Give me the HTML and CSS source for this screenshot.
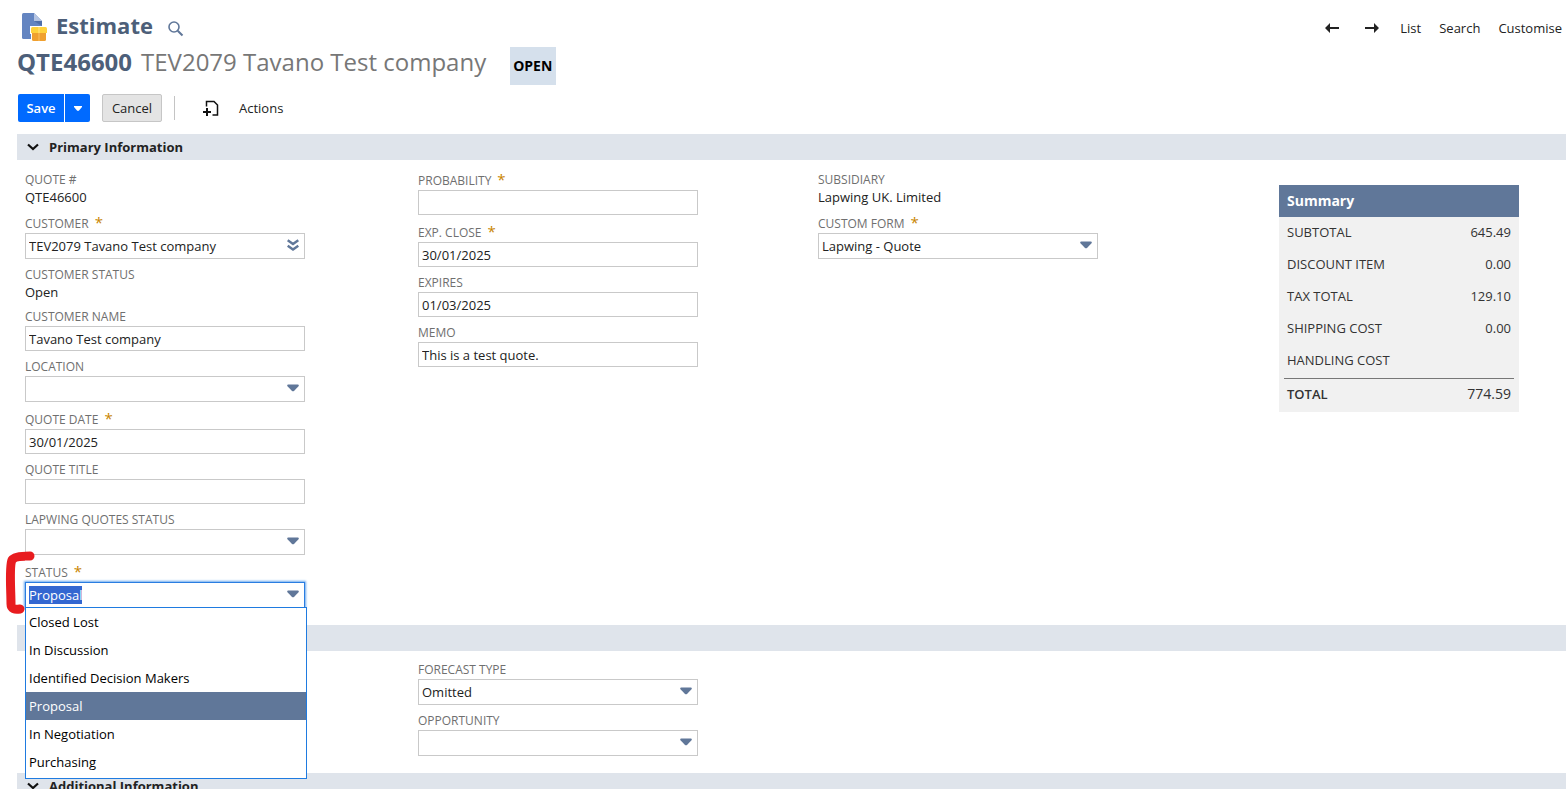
FILE: index.html
```
<!DOCTYPE html>
<html lang="en">
<head>
    <meta charset="UTF-8">
    <meta name="viewport" content="width=device-width, initial-scale=1.0">
    <title>Estimate</title>
    <link rel="stylesheet" href="styles.css">
</head>
<body>

<!-- shared icons -->
<svg class="sprite" aria-hidden="true">
    <symbol id="caret" viewBox="0 0 12 8"><path d="M1.2 .5h9.6c1 0 1.3 1 .7 1.7L7 6.9c-.6.6-1.4.6-2 0L.5 2.200C-.1 1.500.2.5 1.200.5z" fill="#607799"/></symbol>
    <symbol id="chevron" viewBox="0 0 12 8"><path d="M1 1.500 6 6l5-4.500" fill="none" stroke="#111" stroke-width="2.200"/></symbol>
</svg>

<div class="page">
    <!-- title row -->
    <div class="header">
        <div class="title">
            <svg class="record-icon" width="26" height="29" viewBox="0 0 26 29">
                <path d="M0 1.500Q0 0 1.500 0H12l8 8v18H1.500Q0 26 0 24.500z" fill="#6485c1"/>
                <path d="M12 8h8v5z" fill="#4f6fa9"/>
                <path d="M12 0l8 8h-8z" fill="#b4c4e2"/>
                <path d="M8 13h18v8h-1v8H9v-8H8z" fill="#fff"/>
                <path d="M9 15.500Q9 14 10.500 14h13q1.500 0 1.500 1.500V20H9z" fill="#ffd23c"/>
                <path d="M10 20h14v6.500q0 1.500-1.500 1.500h-11Q10 28 10 26.500z" fill="#f0a02f"/>
                <path d="M16.500 14h1v6h-1z" fill="#ffe38a"/>
                <path d="M16.500 20h1v8h-1z" fill="#f8bd63"/>
            </svg>
            <h1>Estimate</h1>
            <button class="icon-btn" aria-label="Quick search">
                <svg width="16" height="16" viewBox="0 0 16 16" fill="none" stroke="#607799">
                    <circle cx="6" cy="6" r="5" stroke-width="1.600"/>
                    <path d="M9.700 9.700 14.500 14.500" stroke-width="2"/>
                </svg>
            </button>
        </div>
        <div class="page-links">
            <a class="arrow" href="#" aria-label="Previous"><svg width="14" height="10" viewBox="0 0 14 10"><path d="M0 5 5 0v4h9v2H5v4z" fill="#222"/></svg></a>
            <a class="arrow" href="#" aria-label="Next"><svg width="14" height="10" viewBox="0 0 14 10"><path d="M14 5 9 0v4H0v2h9v4z" fill="#222"/></svg></a>
            <a href="#">List</a>
            <a href="#">Search</a>
            <a href="#">Customise</a>
        </div>
    </div>

    <div class="record">
        <span class="record-id">QTE46600</span>
        <span class="record-name">TEV2079 Tavano Test company</span>
        <span class="record-status">OPEN</span>
    </div>

    <!-- buttons -->
    <div class="toolbar">
        <div class="split">
            <button class="save">Save</button>
            <button class="save-more" aria-label="More save options">
                <svg width="8" height="5" viewBox="0 0 8 5"><path d="M0 0h8v1L5 4.500q-1 .8-2 0L0 1z" fill="#fff"/></svg>
            </button>
        </div>
        <button class="cancel">Cancel</button>
        <span class="divider"></span>
        <button class="icon-btn" aria-label="New">
            <svg width="16" height="17" viewBox="0 0 16 17" fill="none" stroke="#111" stroke-width="1.500">
                <path d="M3.500 6.500v-5H11l3.500 3.500v10H9.500"/>
                <path d="M0 12h8M4 8v8" stroke-width="2"/>
            </svg>
        </button>
        <button class="actions">Actions</button>
    </div>

    <div class="section-bar">
        <svg width="12" height="8"><use href="#chevron"/></svg>
        <h2>Primary Information</h2>
    </div>
    <div class="section primary">
        <div class="column">
            <div class="field">
                <span class="label">Quote #</span>
                <span class="value">QTE46600</span>
            </div>
            <div class="field">
                <label class="label required" for="customer">Customer</label>
                <div class="control">
                    <input class="box tall" id="customer" type="text" value="TEV2079 Tavano Test company">
                    <svg class="mark" width="12" height="12" viewBox="0 0 12 12" fill="none" stroke="#607799" stroke-width="2.400"><path d="M.7 1.200 6 5l5.300-3.800M.7 6.700 6 10.500l5.300-3.800"/></svg>
                </div>
            </div>
            <div class="field">
                <span class="label">Customer Status</span>
                <span class="value">Open</span>
            </div>
            <div class="field">
                <label class="label" for="customerName">Customer Name</label>
                <input class="box" id="customerName" type="text" value="Tavano Test company">
            </div>
            <div class="field">
                <label class="label" for="location">Location</label>
                <div class="control">
                    <select class="box tall" id="location"><option></option></select>
                    <svg class="mark" width="12" height="8"><use href="#caret"/></svg>
                </div>
            </div>
            <div class="field">
                <label class="label required" for="quoteDate">Quote Date</label>
                <input class="box" id="quoteDate" type="text" value="30/01/2025">
            </div>
            <div class="field">
                <label class="label" for="quoteTitle">Quote Title</label>
                <input class="box" id="quoteTitle" type="text">
            </div>
            <div class="field">
                <label class="label" for="quotesStatus">Lapwing Quotes Status</label>
                <div class="control">
                    <select class="box tall" id="quotesStatus"><option></option></select>
                    <svg class="mark" width="12" height="8"><use href="#caret"/></svg>
                </div>
            </div>
            <div class="field status-field">
                <label class="label required" for="status">Status</label>
                <div class="control">
                    <input class="box tall open" id="status" type="text" value="Proposal" role="combobox" aria-expanded="true" aria-controls="statusList">
                    <svg class="mark" width="12" height="8"><use href="#caret"/></svg>
                    <ul class="dropdown" id="statusList" role="listbox">
                        <li role="option">Closed Lost</li>
                        <li role="option">In Discussion</li>
                        <li role="option">Identified Decision Makers</li>
                        <li role="option" class="selected" aria-selected="true">Proposal</li>
                        <li role="option">In Negotiation</li>
                        <li role="option">Purchasing</li>
                    </ul>
                </div>
                <!-- red bracket marking the field -->
                <svg class="bracket" width="30" height="64" viewBox="0 0 30 64"><path d="M25 5C16 5 9 6 7 9 4 15 6 40 6 53c0 5 4 6 9 5" fill="none" stroke="#e81c1f" stroke-width="9" stroke-linecap="round"/></svg>
            </div>
        </div>

        <div class="column">
            <div class="field">
                <label class="label required" for="probability">Probability</label>
                <input class="box" id="probability" type="text">
            </div>
            <div class="field">
                <label class="label required" for="expClose">Exp. Close</label>
                <input class="box" id="expClose" type="text" value="30/01/2025">
            </div>
            <div class="field">
                <label class="label" for="expires">Expires</label>
                <input class="box" id="expires" type="text" value="01/03/2025">
            </div>
            <div class="field">
                <label class="label" for="memo">Memo</label>
                <input class="box" id="memo" type="text" value="This is a test quote.">
            </div>
        </div>

        <div class="column">
            <div class="field">
                <span class="label">Subsidiary</span>
                <span class="value">Lapwing UK. Limited</span>
            </div>
            <div class="field">
                <label class="label required" for="customForm">Custom Form</label>
                <div class="control">
                    <select class="box tall" id="customForm"><option>Lapwing - Quote</option></select>
                    <svg class="mark" width="12" height="8"><use href="#caret"/></svg>
                </div>
            </div>
        </div>

        <div class="summary">
            <h3>Summary</h3>
            <table>
                <tr><th scope="row">Subtotal</th><td>645.49</td></tr>
                <tr><th scope="row">Discount Item</th><td>0.00</td></tr>
                <tr><th scope="row">Tax Total</th><td>129.10</td></tr>
                <tr><th scope="row">Shipping Cost</th><td>0.00</td></tr>
                <tr><th scope="row">Handling Cost</th><td></td></tr>
                <tr class="total"><th scope="row">Total</th><td>774.59</td></tr>
            </table>
        </div>
    </div>

    <div class="section-bar"></div>
    <div class="section">
        <div class="column second">
            <div class="field">
                <label class="label" for="forecast">Forecast Type</label>
                <div class="control">
                    <select class="box tall" id="forecast"><option>Omitted</option></select>
                    <svg class="mark" width="12" height="8"><use href="#caret"/></svg>
                </div>
            </div>
            <div class="field">
                <label class="label" for="opportunity">Opportunity</label>
                <div class="control">
                    <select class="box tall" id="opportunity"><option></option></select>
                    <svg class="mark" width="12" height="8"><use href="#caret"/></svg>
                </div>
            </div>
        </div>
    </div>

    <div class="section-bar">
        <svg width="12" height="8"><use href="#chevron"/></svg>
        <h2>Additional Information</h2>
    </div>
</div>

<script src="script.js"></script>
</body>
</html>
```
FILE: styles.css
```
* {
    box-sizing: border-box;
}
body {
    margin: 0;
    background: #fff;
    color: #222;
    font-family: "Open Sans", "Noto Sans", sans-serif;
    font-size: 13px;
}
h1, h2, h3, ul {
    margin: 0;
    padding: 0;
}
button, input, select {
    font: inherit;
    color: inherit;
    margin: 0;
}
button {
    border: 0;
    padding: 0;
    background: none;
    cursor: pointer;
}
svg {
    display: block;
    flex: none;
}
.sprite {
    display: none;
}
.page {
    height: 100vh;
    overflow: hidden;
    padding: 12px 0 0 17px;
}

/* header */
.header {
    display: flex;
    justify-content: space-between;
    align-items: flex-start;
    height: 30px;
    padding: 0 4px 0 5px;
}
.title {
    display: flex;
    align-items: flex-start;
}
.record-icon {
    margin-top: 1px;
}
.title h1 {
    margin: 0 15px 0 8px;
    font-size: 22px;
    line-height: 26px;
    color: #4d5f79;
}
.title .icon-btn {
    margin-top: 9px;
}
.page-links {
    display: flex;
    align-items: center;
    gap: 18px;
    line-height: 32px;
}
.page-links a {
    color: #222;
    text-decoration: none;
}
.page-links .arrow {
    margin-right: 8px;
}
.page-links .arrow + .arrow {
    margin-right: 3px;
}
.record {
    display: flex;
    align-items: flex-start;
    height: 38px;
    margin-top: 5px;
    font-size: 24px;
    line-height: 30px;
}
.record-id {
    font-weight: bold;
    color: #4d5f79;
    margin-right: 9px;
}
.record-name {
    color: #777;
    margin-right: 24px;
}
.record-status {
    padding: 0 4px 0 3px;
    background: #d5e0ec;
    color: #000;
    font-size: 14px;
    font-weight: bold;
    line-height: 38px;
}

/* buttons */
.toolbar {
    display: flex;
    align-items: center;
    height: 28px;
    margin: 9px 0 12px;
    padding-left: 1px;
}
.split {
    display: flex;
    gap: 1px;
    height: 28px;
}
.split button {
    background: #006aff;
    color: #fff;
    font-weight: 600;
}
.save {
    width: 46px;
    border-radius: 2px 0 0 2px;
}
.save-more {
    display: flex;
    align-items: center;
    justify-content: center;
    width: 25px;
    border-radius: 0 2px 2px 0;
}
.cancel {
    width: 60px;
    height: 28px;
    margin-left: 12px;
    border: 1px solid #c6c6c6;
    border-radius: 2px;
    background: #e4e4e4;
}
.divider {
    width: 1px;
    height: 24px;
    margin: 0 28px 0 12px;
    background: #c4c4c4;
}
.actions {
    margin-left: 20px;
}

/* sections */
.section-bar {
    display: flex;
    align-items: center;
    gap: 10px;
    height: 26px;
    padding-left: 10px;
    background: #dfe4eb;
}
.section-bar h2 {
    font-size: 13px;
    line-height: 18px;
}
.section {
    display: grid;
    grid-template-columns: 393fr 400fr 461fr 287fr;
    align-items: start;
    padding: 10px 0 17px 8px;
}
.section.primary {
    padding-top: 11px;
}
.column {
    display: flex;
    flex-direction: column;
    gap: 7px;
}
.column.second {
    grid-column: 2;
}
.field {
    width: 280px;
}
.label {
    display: block;
    font-size: 12px;
    line-height: 18px;
    color: #6f6f6f;
    text-transform: uppercase;
}
.label.required {
    padding-top: 2px;
}
.field:first-child .required {
    padding-top: 1px;
}
.label.required::after {
    content: "*";
    margin-left: 6px;
    font-size: 15px;
    line-height: 0;
    color: #c98500;
}
.value {
    display: block;
    line-height: 17px;
}
.control {
    position: relative;
}
.box {
    display: block;
    width: 100%;
    height: 25px;
    padding: 0 3px;
    border: 1px solid #c9c9c9;
    border-radius: 0;
    background: #fff;
    appearance: none;
    outline: 0;
}
.box.tall {
    height: 26px;
}
.mark {
    position: absolute;
    top: 0;
    bottom: 2px;
    right: 6px;
    margin: auto 0;
    pointer-events: none;
}

/* open status list */
.status-field {
    position: relative;
}
.box.open {
    border-color: #2a7de1;
    box-shadow: 0 0 2px 1px #6aa9ee;
}
.box.open::selection {
    background: #3367d1;
    color: #fff;
}
.dropdown {
    position: absolute;
    z-index: 2;
    top: 25px;
    left: 0;
    width: 282px;
    padding-bottom: 2px;
    border: 1px solid #1f7be0;
    background: #fff;
    color: #000;
    list-style: none;
}
.dropdown li {
    padding: 0 3px;
    line-height: 28px;
}
.dropdown .selected {
    background: #607799;
    color: #fff;
}
.bracket {
    position: absolute;
    z-index: 1;
    left: -20px;
    top: -11px;
    pointer-events: none;
}

/* summary */
.summary {
    width: 240px;
    margin-top: 14px;
    padding-bottom: 1px;
    background: #f1f1f1;
}
.summary h3 {
    padding: 0 8px;
    background: #607799;
    color: #fff;
    font-size: 14px;
    line-height: 32px;
}
.summary table {
    width: 230px;
    height: 194px;
    margin: 0 5px;
    border-collapse: collapse;
}
.summary th,
.summary td {
    padding: 0 3px 2px;
    color: #333;
    font-weight: normal;
    line-height: 18px;
}
.summary th {
    text-align: left;
    text-transform: uppercase;
}
.summary td {
    text-align: right;
}
.summary .total {
    border-top: 1px solid #777;
}
.summary .total th {
    font-weight: 600;
}
.summary .total td {
    font-size: 14px;
}
```
FILE: script.js
```
// open with the current status selected
const statusBox = document.getElementById('status');
statusBox.focus();
statusBox.select();
```
